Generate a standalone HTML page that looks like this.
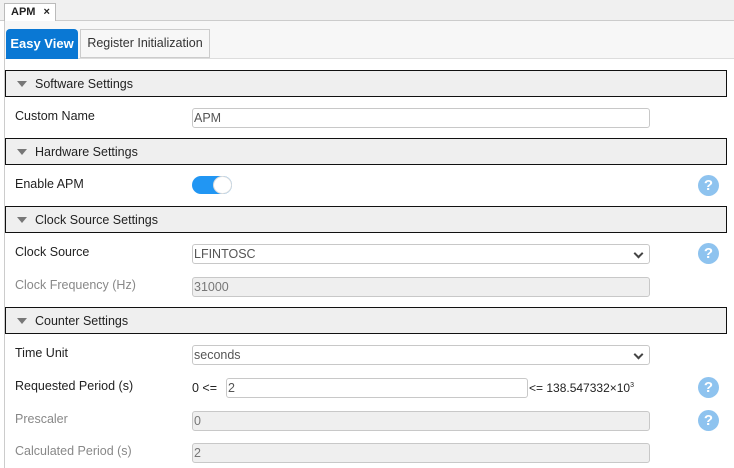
<!DOCTYPE html>
<html><head><style>
*{box-sizing:border-box;margin:0;padding:0}
body{width:734px;height:468px;overflow:hidden;background:#fff;font-family:"Liberation Sans","DejaVu Sans",sans-serif;font-size:12.5px;color:#222;position:relative}
.a{position:absolute}
.hdr{position:absolute;left:5px;width:722px;height:27px;background:#efefef;border:1px solid #111;line-height:26px;padding-left:29px;font-size:12.5px;color:#222}
.hdr:before{content:"";position:absolute;left:11px;top:10px;border-left:5px solid transparent;border-right:5px solid transparent;border-top:6px solid #777}
.lbl{position:absolute;left:15px;font-size:12.5px;margin-top:1px}
.dis{color:#888}
.in{position:absolute;left:192px;width:458px;height:20px;border:1px solid #c8c8c8;border-radius:3px;background:#fff;padding-left:1px;line-height:19px;color:#555;font-size:12.5px}
.in.g{background:#efefef;color:#777}
.sel:after{content:"";position:absolute;right:7px;top:5px;width:5px;height:5px;border-right:2px solid #444;border-bottom:2px solid #444;transform:rotate(45deg)}
.q{position:absolute;left:698px;width:21px;height:21px;border-radius:50%;background:#8ec3ef;color:#fff;font-weight:bold;font-size:15px;text-align:center;line-height:21px}
</style></head><body>
<div class="a" style="left:0;top:0;width:734px;height:21px;background:#f0f0f0;border-bottom:1px solid #ccc"></div>
<div class="a" style="left:4px;top:3px;width:52px;height:18px;background:#fff;border:1px solid #bbb;border-bottom:none;font-weight:bold;font-size:11px;line-height:16px;padding-left:6px">APM <span style="margin-left:5px">×</span></div>
<div class="a" style="left:4px;top:21px;width:730px;height:447px;border-left:1px solid #ccc"></div>
<div class="a" style="left:5px;top:21px;width:729px;height:38px;background:#f7f7f7;border-bottom:1px solid #ddd"></div>
<div class="a" style="left:6px;top:29px;width:72px;height:30px;background:#0a78d4;color:#fff;font-weight:bold;font-size:13px;line-height:30px;text-align:center;border-radius:4px 4px 0 0">Easy View</div>
<div class="a" style="left:80px;top:29px;width:130px;height:29px;background:#f7f7f7;border:1px solid #ccc;font-size:12.5px;line-height:27px;text-align:center;color:#333">Register Initialization</div>

<div class="hdr" style="top:70px">Software Settings</div>
<div class="lbl" style="top:108px">Custom Name</div>
<div class="in" style="top:108px">APM</div>

<div class="hdr" style="top:138px">Hardware Settings</div>
<div class="lbl" style="top:176px">Enable APM</div>
<div class="a" style="left:192px;top:176px;width:40px;height:18px;border-radius:9px;background:#2196f3"></div>
<div class="a" style="left:213px;top:176px;width:19px;height:18px;border-radius:50%;background:#fff;border:1px solid #ddd"></div>
<div class="q" style="top:175px">?</div>

<div class="hdr" style="top:206px">Clock Source Settings</div>
<div class="lbl" style="top:244px">Clock Source</div>
<div class="in sel" style="top:244px">LFINTOSC</div>
<div class="q" style="top:243px">?</div>
<div class="lbl dis" style="top:277px">Clock Frequency (Hz)</div>
<div class="in g" style="top:277px">31000</div>

<div class="hdr" style="top:307px">Counter Settings</div>
<div class="lbl" style="top:345px">Time Unit</div>
<div class="in sel" style="top:345px">seconds</div>
<div class="lbl" style="top:378px">Requested Period (s)</div>
<div class="a" style="left:192px;top:381px">0 &lt;=</div>
<div class="in" style="left:226px;width:302px;top:378px">2</div>
<div class="a" style="left:529px;top:381px;font-size:12px">&lt;= 138.547332×10<sup style="font-size:7px">3</sup></div>
<div class="q" style="top:377px">?</div>
<div class="lbl dis" style="top:411px">Prescaler</div>
<div class="in g" style="top:411px">0</div>
<div class="q" style="top:410px">?</div>
<div class="lbl dis" style="top:443px">Calculated Period (s)</div>
<div class="in g" style="top:443px">2</div>
</body></html>
